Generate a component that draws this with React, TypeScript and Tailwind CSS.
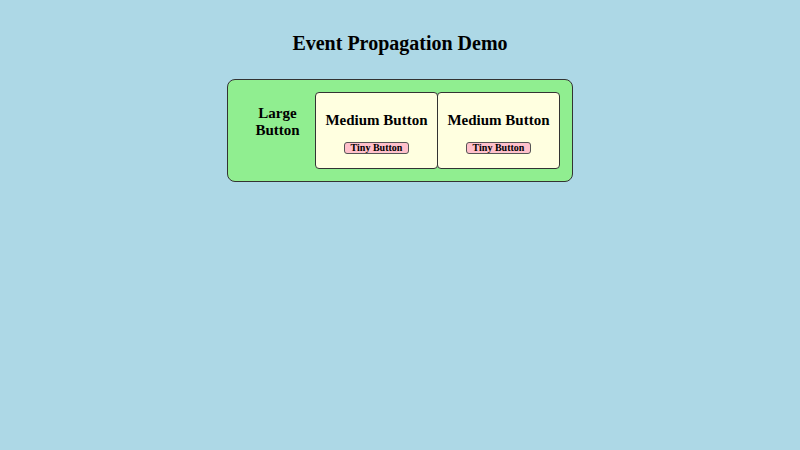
export default function App() {
  return (
    <div
      className="min-h-screen w-full bg-[#add8e6] flex flex-col items-center pt-[31px]"
      style={{ fontFamily: '"Liberation Serif", "Times New Roman", serif' }}
    >
      <h1 className="text-[20px] font-bold text-black leading-[24px]">Event Propagation Demo</h1>

      {/* Large button */}
      <div className="mt-[24px] flex items-start bg-[#90ee90] border border-[#333] rounded-lg p-3">
        <div className="w-[75px] mt-[13px] text-center text-[15px] font-bold leading-[17px] text-black">
          Large
          <br />
          Button
        </div>
        {[0, 1].map((i) => (
          <div
            key={i}
            className="w-[123px] h-[77px] -mr-px last:mr-0 flex flex-col items-center pt-[19px] gap-[13px] bg-[#ffffe0] border border-[#333] rounded-[4px]"
          >
            <div className="text-[15px] font-bold leading-[17px] text-black">Medium Button</div>
            <div className="h-[12px] px-[6px] flex items-center bg-[#ffc0cb] border border-[#555] rounded-[3px] text-[10px] font-bold leading-none text-black">
              Tiny Button
            </div>
          </div>
        ))}
      </div>
    </div>
  );
}
